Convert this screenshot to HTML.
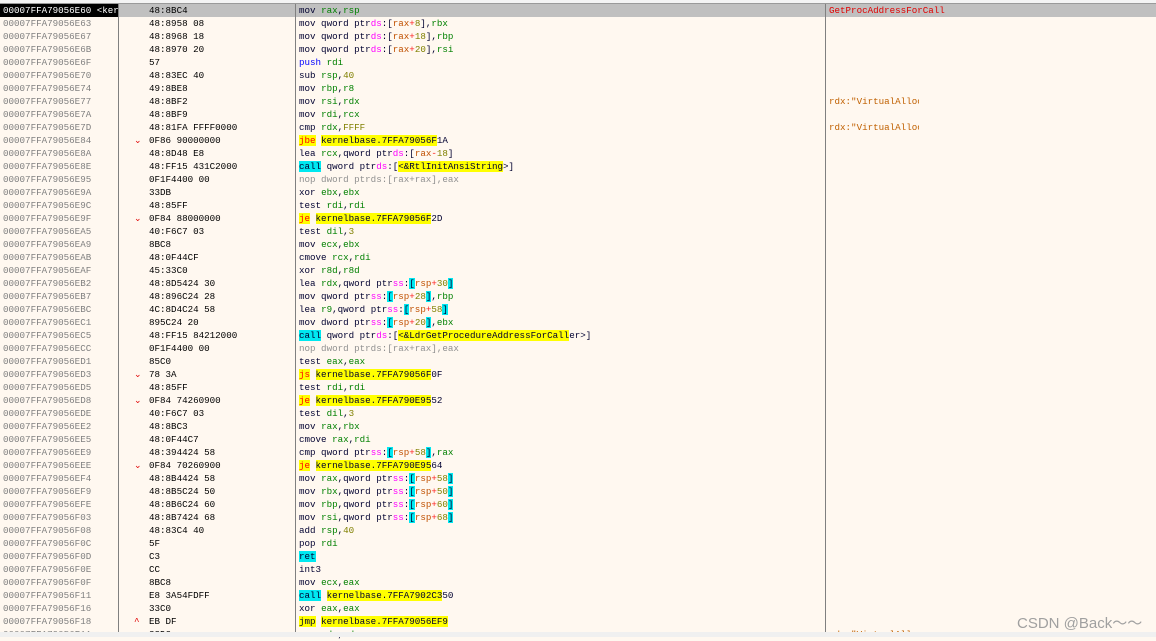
<!DOCTYPE html>
<html><head><meta charset="utf-8"><style>
body{margin:0;width:1156px;height:637px;background:#fff8f0;position:relative;overflow:hidden;font-family:"Liberation Mono",monospace;font-size:9.2px;}
.top{position:absolute;left:0;top:0;width:1156px;height:3px;background:#f4f4f4;border-bottom:1px solid #9a9a9a}
.vl{position:absolute;top:4px;height:628px;width:1px;background:#808080}
.bot{position:absolute;left:0;top:632px;width:1156px;height:5px;background:#f0f0f0}
.row{position:absolute;left:0;width:1156px;height:13px;line-height:13px;white-space:pre}
.row span{white-space:pre}
.a{position:absolute;left:3px;color:#808080}
.ar{position:absolute;left:134px;color:#e00000}
.by{position:absolute;left:149px;color:#000}
.i{position:absolute;left:299px;color:#000030}
.cm{position:absolute;left:829px;color:#c06000;width:90px;overflow:hidden}
.r{color:#008000}.n{color:#808000}.s{color:#ff00ff}.b{color:#c05000}.p{color:#ff2020}
.y{background:#ffff00}.c{background:#00e8f0}.j{color:#ff0000;background:#ffff00}.pu{color:#0000ff}
.g{color:#909090}
.sel{background:#c0c0c0}
</style></head><body>
<div class="top"></div>
<div class="row sel" style="top:4px"></div>
<div class="row" style="top:4px"><span class="a" style="background:#000;color:#fff;width:115px;left:0;padding-left:3px">00007FFA79056E60 &lt;ker</span><span class="by">48:8BC4</span><span class="i">mov <span class="r">rax</span>,<span class="r">rsp</span></span><span class="cm" style="color:#e00000;width:200px">GetProcAddressForCall</span></div>
<div class="row" style="top:17px"><span class="a">00007FFA79056E63</span><span class="by">48:8958 08</span><span class="i">mov qword ptr<span class="s">ds</span>:[<span class="b">rax</span><span class="p">+</span><span class="n">8</span>],<span class="r">rbx</span></span></div>
<div class="row" style="top:30px"><span class="a">00007FFA79056E67</span><span class="by">48:8968 18</span><span class="i">mov qword ptr<span class="s">ds</span>:[<span class="b">rax</span><span class="p">+</span><span class="n">18</span>],<span class="r">rbp</span></span></div>
<div class="row" style="top:43px"><span class="a">00007FFA79056E6B</span><span class="by">48:8970 20</span><span class="i">mov qword ptr<span class="s">ds</span>:[<span class="b">rax</span><span class="p">+</span><span class="n">20</span>],<span class="r">rsi</span></span></div>
<div class="row" style="top:56px"><span class="a">00007FFA79056E6F</span><span class="by">57</span><span class="i"><span class="pu">push</span> <span class="r">rdi</span></span></div>
<div class="row" style="top:69px"><span class="a">00007FFA79056E70</span><span class="by">48:83EC 40</span><span class="i">sub <span class="r">rsp</span>,<span class="n">40</span></span></div>
<div class="row" style="top:82px"><span class="a">00007FFA79056E74</span><span class="by">49:8BE8</span><span class="i">mov <span class="r">rbp</span>,<span class="r">r8</span></span></div>
<div class="row" style="top:95px"><span class="a">00007FFA79056E77</span><span class="by">48:8BF2</span><span class="i">mov <span class="r">rsi</span>,<span class="r">rdx</span></span><span class="cm">rdx:"VirtualAlloc</span></div>
<div class="row" style="top:108px"><span class="a">00007FFA79056E7A</span><span class="by">48:8BF9</span><span class="i">mov <span class="r">rdi</span>,<span class="r">rcx</span></span></div>
<div class="row" style="top:121px"><span class="a">00007FFA79056E7D</span><span class="by">48:81FA FFFF0000</span><span class="i">cmp <span class="r">rdx</span>,<span class="n">FFFF</span></span><span class="cm">rdx:"VirtualAlloc</span></div>
<div class="row" style="top:134px"><span class="a">00007FFA79056E84</span><span class="ar">⌄</span><span class="by">0F86 90000000</span><span class="i"><span class="j">jbe</span> <span class="y">kernelbase.7FFA79056F</span>1A</span></div>
<div class="row" style="top:147px"><span class="a">00007FFA79056E8A</span><span class="by">48:8D48 E8</span><span class="i">lea <span class="r">rcx</span>,qword ptr<span class="s">ds</span>:[<span class="b">rax</span><span class="p">-</span><span class="n">18</span>]</span></div>
<div class="row" style="top:160px"><span class="a">00007FFA79056E8E</span><span class="by">48:FF15 431C2000</span><span class="i"><span class="c">call</span> qword ptr<span class="s">ds</span>:[<span class="y">&lt;&amp;RtlInitAnsiString</span>&gt;]</span></div>
<div class="row" style="top:173px"><span class="a">00007FFA79056E95</span><span class="by">0F1F4400 00</span><span class="i g">nop dword ptrds:[rax+rax],eax</span></div>
<div class="row" style="top:186px"><span class="a">00007FFA79056E9A</span><span class="by">33DB</span><span class="i">xor <span class="r">ebx</span>,<span class="r">ebx</span></span></div>
<div class="row" style="top:199px"><span class="a">00007FFA79056E9C</span><span class="by">48:85FF</span><span class="i">test <span class="r">rdi</span>,<span class="r">rdi</span></span></div>
<div class="row" style="top:212px"><span class="a">00007FFA79056E9F</span><span class="ar">⌄</span><span class="by">0F84 88000000</span><span class="i"><span class="j">je</span> <span class="y">kernelbase.7FFA79056F</span>2D</span></div>
<div class="row" style="top:225px"><span class="a">00007FFA79056EA5</span><span class="by">40:F6C7 03</span><span class="i">test <span class="r">dil</span>,<span class="n">3</span></span></div>
<div class="row" style="top:238px"><span class="a">00007FFA79056EA9</span><span class="by">8BC8</span><span class="i">mov <span class="r">ecx</span>,<span class="r">ebx</span></span></div>
<div class="row" style="top:251px"><span class="a">00007FFA79056EAB</span><span class="by">48:0F44CF</span><span class="i">cmove <span class="r">rcx</span>,<span class="r">rdi</span></span></div>
<div class="row" style="top:264px"><span class="a">00007FFA79056EAF</span><span class="by">45:33C0</span><span class="i">xor <span class="r">r8d</span>,<span class="r">r8d</span></span></div>
<div class="row" style="top:277px"><span class="a">00007FFA79056EB2</span><span class="by">48:8D5424 30</span><span class="i">lea <span class="r">rdx</span>,qword ptr<span class="s">ss</span>:<span class="c">[</span><span class="b">rsp</span><span class="p">+</span><span class="n">30</span><span class="c">]</span></span></div>
<div class="row" style="top:290px"><span class="a">00007FFA79056EB7</span><span class="by">48:896C24 28</span><span class="i">mov qword ptr<span class="s">ss</span>:<span class="c">[</span><span class="b">rsp</span><span class="p">+</span><span class="n">28</span><span class="c">]</span>,<span class="r">rbp</span></span></div>
<div class="row" style="top:303px"><span class="a">00007FFA79056EBC</span><span class="by">4C:8D4C24 58</span><span class="i">lea <span class="r">r9</span>,qword ptr<span class="s">ss</span>:<span class="c">[</span><span class="b">rsp</span><span class="p">+</span><span class="n">58</span><span class="c">]</span></span></div>
<div class="row" style="top:316px"><span class="a">00007FFA79056EC1</span><span class="by">895C24 20</span><span class="i">mov dword ptr<span class="s">ss</span>:<span class="c">[</span><span class="b">rsp</span><span class="p">+</span><span class="n">20</span><span class="c">]</span>,<span class="r">ebx</span></span></div>
<div class="row" style="top:329px"><span class="a">00007FFA79056EC5</span><span class="by">48:FF15 84212000</span><span class="i"><span class="c">call</span> qword ptr<span class="s">ds</span>:[<span class="y">&lt;&amp;LdrGetProcedureAddressForCall</span>er&gt;]</span></div>
<div class="row" style="top:342px"><span class="a">00007FFA79056ECC</span><span class="by">0F1F4400 00</span><span class="i g">nop dword ptrds:[rax+rax],eax</span></div>
<div class="row" style="top:355px"><span class="a">00007FFA79056ED1</span><span class="by">85C0</span><span class="i">test <span class="r">eax</span>,<span class="r">eax</span></span></div>
<div class="row" style="top:368px"><span class="a">00007FFA79056ED3</span><span class="ar">⌄</span><span class="by">78 3A</span><span class="i"><span class="j">js</span> <span class="y">kernelbase.7FFA79056F</span>0F</span></div>
<div class="row" style="top:381px"><span class="a">00007FFA79056ED5</span><span class="by">48:85FF</span><span class="i">test <span class="r">rdi</span>,<span class="r">rdi</span></span></div>
<div class="row" style="top:394px"><span class="a">00007FFA79056ED8</span><span class="ar">⌄</span><span class="by">0F84 74260900</span><span class="i"><span class="j">je</span> <span class="y">kernelbase.7FFA790E95</span>52</span></div>
<div class="row" style="top:407px"><span class="a">00007FFA79056EDE</span><span class="by">40:F6C7 03</span><span class="i">test <span class="r">dil</span>,<span class="n">3</span></span></div>
<div class="row" style="top:420px"><span class="a">00007FFA79056EE2</span><span class="by">48:8BC3</span><span class="i">mov <span class="r">rax</span>,<span class="r">rbx</span></span></div>
<div class="row" style="top:433px"><span class="a">00007FFA79056EE5</span><span class="by">48:0F44C7</span><span class="i">cmove <span class="r">rax</span>,<span class="r">rdi</span></span></div>
<div class="row" style="top:446px"><span class="a">00007FFA79056EE9</span><span class="by">48:394424 58</span><span class="i">cmp qword ptr<span class="s">ss</span>:<span class="c">[</span><span class="b">rsp</span><span class="p">+</span><span class="n">58</span><span class="c">]</span>,<span class="r">rax</span></span></div>
<div class="row" style="top:459px"><span class="a">00007FFA79056EEE</span><span class="ar">⌄</span><span class="by">0F84 70260900</span><span class="i"><span class="j">je</span> <span class="y">kernelbase.7FFA790E95</span>64</span></div>
<div class="row" style="top:472px"><span class="a">00007FFA79056EF4</span><span class="by">48:8B4424 58</span><span class="i">mov <span class="r">rax</span>,qword ptr<span class="s">ss</span>:<span class="c">[</span><span class="b">rsp</span><span class="p">+</span><span class="n">58</span><span class="c">]</span></span></div>
<div class="row" style="top:485px"><span class="a">00007FFA79056EF9</span><span class="by">48:8B5C24 50</span><span class="i">mov <span class="r">rbx</span>,qword ptr<span class="s">ss</span>:<span class="c">[</span><span class="b">rsp</span><span class="p">+</span><span class="n">50</span><span class="c">]</span></span></div>
<div class="row" style="top:498px"><span class="a">00007FFA79056EFE</span><span class="by">48:8B6C24 60</span><span class="i">mov <span class="r">rbp</span>,qword ptr<span class="s">ss</span>:<span class="c">[</span><span class="b">rsp</span><span class="p">+</span><span class="n">60</span><span class="c">]</span></span></div>
<div class="row" style="top:511px"><span class="a">00007FFA79056F03</span><span class="by">48:8B7424 68</span><span class="i">mov <span class="r">rsi</span>,qword ptr<span class="s">ss</span>:<span class="c">[</span><span class="b">rsp</span><span class="p">+</span><span class="n">68</span><span class="c">]</span></span></div>
<div class="row" style="top:524px"><span class="a">00007FFA79056F08</span><span class="by">48:83C4 40</span><span class="i">add <span class="r">rsp</span>,<span class="n">40</span></span></div>
<div class="row" style="top:537px"><span class="a">00007FFA79056F0C</span><span class="by">5F</span><span class="i">pop <span class="r">rdi</span></span></div>
<div class="row" style="top:550px"><span class="a">00007FFA79056F0D</span><span class="by">C3</span><span class="i"><span class="c">ret</span></span></div>
<div class="row" style="top:563px"><span class="a">00007FFA79056F0E</span><span class="by">CC</span><span class="i">int3</span></div>
<div class="row" style="top:576px"><span class="a">00007FFA79056F0F</span><span class="by">8BC8</span><span class="i">mov <span class="r">ecx</span>,<span class="r">eax</span></span></div>
<div class="row" style="top:589px"><span class="a">00007FFA79056F11</span><span class="by">E8 3A54FDFF</span><span class="i"><span class="c">call</span> <span class="y">kernelbase.7FFA7902C3</span>50</span></div>
<div class="row" style="top:602px"><span class="a">00007FFA79056F16</span><span class="by">33C0</span><span class="i">xor <span class="r">eax</span>,<span class="r">eax</span></span></div>
<div class="row" style="top:615px"><span class="a">00007FFA79056F18</span><span class="ar">^</span><span class="by">EB DF</span><span class="i"><span class="y">jmp</span> <span class="y">kernelbase.7FFA79056EF9</span></span></div>
<div class="row" style="top:628px"><span class="a">00007FFA79056F1A</span><span class="by">33D2</span><span class="i">xor <span class="r">edx</span>,<span class="r">edx</span></span><span class="cm">rdx:"VirtualAlloc</span></div>
<div class="vl" style="left:118px"></div>
<div class="vl" style="left:295px"></div>
<div class="vl" style="left:825px"></div>
<div class="bot"></div>
<div style="position:absolute;left:1017px;top:612px;font-family:'Liberation Sans',sans-serif;font-size:15px;color:#a0a0a0;white-space:pre">CSDN @Back～～</div>
</body></html>
